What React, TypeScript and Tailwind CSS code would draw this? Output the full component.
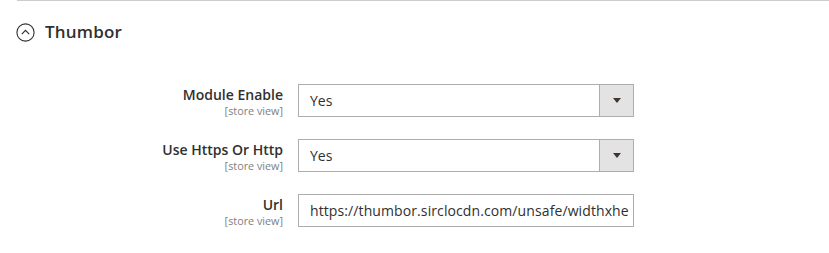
export default function App() {
  const rows = [
    { label: "Module Enable", kind: "select", value: "Yes" },
    { label: "Use Https Or Http", kind: "select", value: "Yes" },
    { label: "Url", kind: "input", value: "https://thumbor.sirclocdn.com/unsafe/widthxhe" },
  ];

  return (
    <div className="w-[829px] h-[253px] bg-white font-['Open_Sans',sans-serif] text-[#303030] overflow-hidden">
      {/* Section header */}
      <div className="ml-[17px] border-t border-[#cccccc]">
        <div className="flex items-center h-[62px] -ml-[1px]">
          <svg width="19" height="19" viewBox="0 0 19 19" className="shrink-0">
            <circle cx="9.5" cy="9.5" r="8.6" fill="none" stroke="#303030" strokeWidth="1.1" />
            <path d="M5.8 11.2 L9.5 7.4 L13.2 11.2" fill="none" stroke="#303030" strokeWidth="1.2" />
          </svg>
          <span className="ml-[10px] text-[17px] font-semibold tracking-[0.2px]">Thumbor</span>
        </div>
      </div>

      {/* Fields */}
      <div className="flex flex-col gap-[22px] mt-[21px]">
        {rows.map((row) => (
          <div key={row.label} className="flex items-start h-[33px]">
            <div className="w-[284px] shrink-0 pr-[1px] text-right pt-[1px] flex flex-col gap-[1px]">
              <div className="text-[14px] font-semibold leading-[19px]">{row.label}</div>
              <div className="text-[10.8px] leading-[12px] text-[#808080]">[store view]</div>
            </div>
            <div className="ml-[14px] w-[336px] h-[33px] border border-[#adadad] flex bg-white">
              {row.kind === "select" ? (
                <>
                  <div className="flex-1 pl-[11px] flex items-center text-[14px]">{row.value}</div>
                  <div className="w-[34px] border-l border-[#adadad] bg-[#e3e3e3] flex items-center justify-center">
                    <svg width="8" height="5" viewBox="0 0 8 5">
                      <path d="M0 0 H8 L4 5 Z" fill="#41362f" />
                    </svg>
                  </div>
                </>
              ) : (
                <div className="flex-1 pl-[11px] flex items-center text-[14px] tracking-[0.1px] whitespace-nowrap overflow-hidden">
                  {row.value}
                </div>
              )}
            </div>
          </div>
        ))}
      </div>
    </div>
  );
}
